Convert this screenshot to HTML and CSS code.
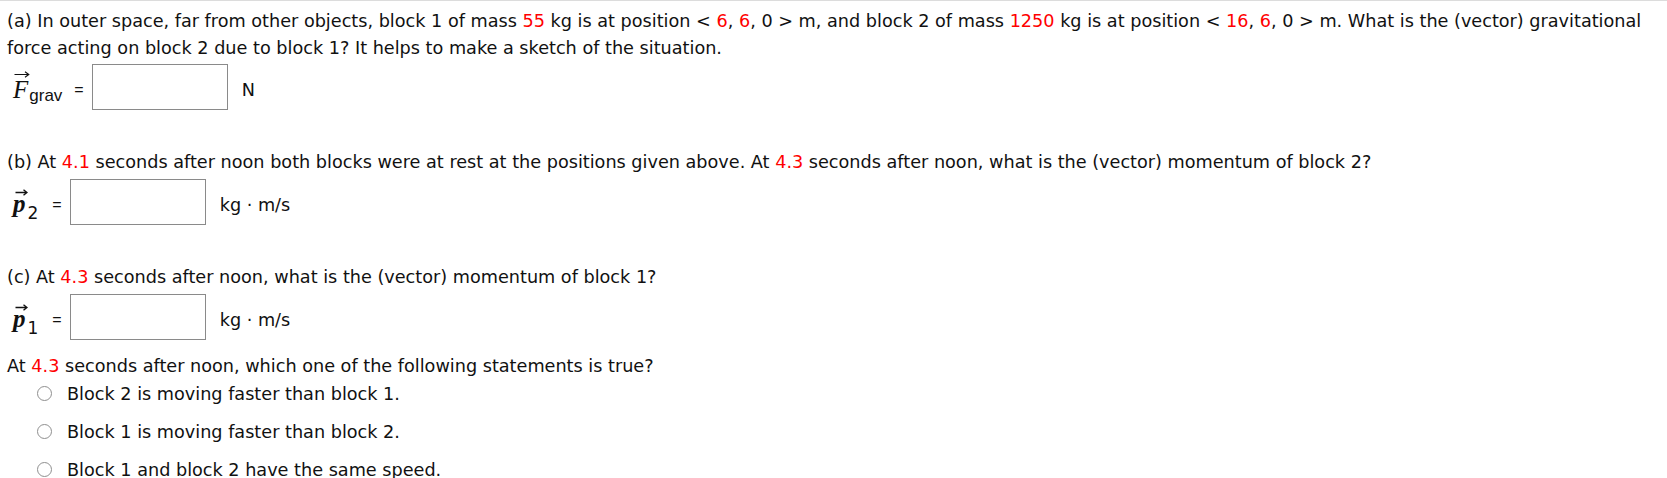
FILE: index.html
```html
<!DOCTYPE html>
<html lang="en">
<head>
  <meta charset="UTF-8" />
  <title>Gravitational force and momentum</title>
  <link rel="stylesheet" href="styles.css">
</head>
<body>
  <div class="question">
    <p class="prompt">(a) In outer space, far from other objects, block 1 of mass <span class="num">55</span> kg is at position &lt; <span class="num">6</span>, <span class="num">6</span>, 0 &gt; m, and block 2 of mass <span class="num">1250</span> kg is at position &lt; <span class="num">16</span>, <span class="num">6</span>, 0 &gt; m. What is the (vector) gravitational force acting on block 2 due to block 1? It helps to make a sketch of the situation.</p>
    <div class="answer-row row-a">
      <span class="label">
        <span class="vec vec-f">F<svg class="arrow" width="16" height="7" viewBox="0 0 16 7"><path d="M0.5 3.5H14.5M11 0.8L14.8 3.5L11 6.2" fill="none" stroke="#111" stroke-width="1.1"/></svg></span><span class="sub sub-grav">grav</span>
      </span>
      <span class="eq eq-a">=</span>
      <input class="answer-box" type="text">
      <span class="unit">N</span>
    </div>

    <p class="prompt part">(b) At <span class="num">4.1</span> seconds after noon both blocks were at rest at the positions given above. At <span class="num">4.3</span> seconds after noon, what is the (vector) momentum of block 2?</p>
    <div class="answer-row">
      <span class="label">
        <span class="vec vec-p">p<svg class="arrow" width="13" height="7" viewBox="0 0 13 7"><path d="M0.5 3.5H11.5M8.5 0.8L12 3.5L8.5 6.2" fill="none" stroke="#111" stroke-width="1.4"/></svg></span><span class="sub">2</span>
      </span>
      <span class="eq">=</span>
      <input class="answer-box" type="text">
      <span class="unit">kg · m/s</span>
    </div>

    <p class="prompt part">(c) At <span class="num">4.3</span> seconds after noon, what is the (vector) momentum of block 1?</p>
    <div class="answer-row">
      <span class="label">
        <span class="vec vec-p">p<svg class="arrow" width="13" height="7" viewBox="0 0 13 7"><path d="M0.5 3.5H11.5M8.5 0.8L12 3.5L8.5 6.2" fill="none" stroke="#111" stroke-width="1.4"/></svg></span><span class="sub">1</span>
      </span>
      <span class="eq">=</span>
      <input class="answer-box" type="text">
      <span class="unit">kg · m/s</span>
    </div>

    <p class="prompt choice-prompt">At <span class="num">4.3</span> seconds after noon, which one of the following statements is true?</p>
    <ul class="choices">
      <li><input type="radio" name="speed" class="radio"><span>Block 2 is moving faster than block 1.</span></li>
      <li><input type="radio" name="speed" class="radio"><span>Block 1 is moving faster than block 2.</span></li>
      <li><input type="radio" name="speed" class="radio"><span>Block 1 and block 2 have the same speed.</span></li>
    </ul>
  </div>
</body>
</html>
```

FILE: styles.css
```css
* {
  margin: 0;
  padding: 0;
  box-sizing: border-box;
}

body {
  background: white;
  color: #111;
  font-family: 'DejaVu Sans', Verdana, sans-serif;
  font-size: 17.65px;
  line-height: 27px;
}

.question {
  border-top: 1px solid #dcdcdc;
  padding: 7px 7px 0;
}

.num {
  color: #f00;
}

.part {
  margin-top: 39px;
}

.answer-row {
  display: flex;
  align-items: center;
  margin-top: 3px;
  height: 46px;
}

.row-a {
  margin-top: 2px;
}

.label {
  display: flex;
  align-items: baseline;
  margin-left: 6px;
  line-height: 1;
}

.vec {
  position: relative;
  font-family: 'Liberation Serif', 'Times New Roman', serif;
  font-style: italic;
}

.vec-f {
  font-size: 25px;
  margin-top: 4px;
}

.vec-p {
  font-size: 25px;
  font-weight: bold;
  margin-top: 2px;
}

.arrow {
  position: absolute;
  left: 1px;
  top: -6px;
}

.vec-p .arrow {
  top: -2px;
  left: 2px;
}

.sub {
  font-size: 17px;
  position: relative;
  top: 7px;
  margin-left: 2px;
}

.sub-grav {
  font-family: 'Liberation Sans', Arial, sans-serif;
  top: 3px;
  margin-left: 1px;
}

.eq {
  font-family: 'Liberation Sans', Arial, sans-serif;
  font-size: 16px;
  margin-left: 14px;
  margin-right: 8px;
  margin-top: 4px;
}

.eq-a {
  margin-left: 12px;
  margin-top: 5px;
}

.answer-box {
  width: 136px;
  height: 46px;
  border: 1px solid #8a8a8a;
  background: white;
  outline: none;
}

.unit {
  margin-left: 14px;
  margin-top: 6px;
}

.choice-prompt {
  margin-top: 13px;
}

.choices {
  list-style: none;
  margin-top: 1px;
}

.choices li {
  display: flex;
  align-items: center;
  margin-bottom: 11px;
  padding-left: 30px;
}

.radio {
  appearance: none;
  width: 15px;
  height: 15px;
  border: 1px solid #8f8f8f;
  border-radius: 50%;
  background: white;
  margin-right: 15px;
  margin-top: -2px;
}
```
